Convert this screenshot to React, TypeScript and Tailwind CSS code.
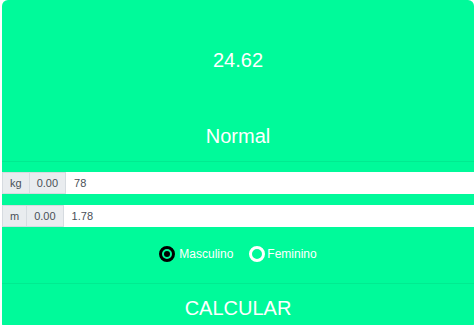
import { useState } from "react"

function Field({ unit, value }: { unit: string; value: string }) {
  return (
    <div className="flex h-[22px] text-[11px] text-[#495057]">
      <span className="flex items-center px-[7px] bg-[#e9ecef] border border-[#d6dbe0]">{unit}</span>
      <span className="flex items-center px-[7px] bg-[#e9ecef] border border-l-0 border-[#d6dbe0]">0.00</span>
      <input
        className="flex-1 min-w-0 bg-white px-[8px] outline-none text-[11px] text-[#495057]"
        defaultValue={value}
      />
    </div>
  )
}

function Radio({ checked, label, gap, onClick }: { checked: boolean; label: string; gap: string; onClick: () => void }) {
  return (
    <label className="flex items-center cursor-pointer" onClick={onClick}>
      <span
        className={
          checked
            ? "flex items-center justify-center w-[16px] h-[16px] rounded-full border-[3px] border-black"
            : "flex items-center justify-center w-[16px] h-[16px] rounded-full border-[3px] border-white"
        }
      >
        {checked && <span className="w-[6px] h-[6px] rounded-full bg-black" />}
      </span>
      <span className={gap + " text-[12px] text-white"}>{label}</span>
    </label>
  )
}

export default function App() {
  const [sex, setSex] = useState("m")

  return (
    <div className="bg-white min-h-[325px] pl-[2px] font-['Liberation_Sans',Arial,sans-serif]">
      <div className="bg-[#00fa9a] rounded-md h-[330px] flex flex-col text-white overflow-hidden">
        <div className="h-[162px] border-b border-black/[0.06] flex flex-col items-center pt-[48px]">
          <p className="text-[20px] leading-[24px]">24.62</p>
          <p className="mt-[52px] text-[20px] leading-[24px]">Normal</p>
        </div>
        <div className="h-[122px] border-b border-black/[0.06] pt-[10px]">
          <Field unit="kg" value="78" />
          <div className="mt-[11px]">
            <Field unit="m" value="1.78" />
          </div>
          <div className="mt-[18px] flex justify-center items-center">
            <Radio checked={sex === "m"} label="Masculino" gap="ml-[4px]" onClick={() => setSex("m")} />
            <div className="w-[16px]" />
            <Radio checked={sex === "f"} label="Feminino" gap="ml-[2px]" onClick={() => setSex("f")} />
          </div>
        </div>
        <div className="flex justify-center pt-[12px]">
          <button className="text-[20px] leading-[24px] text-white">CALCULAR</button>
        </div>
      </div>
    </div>
  )
}
